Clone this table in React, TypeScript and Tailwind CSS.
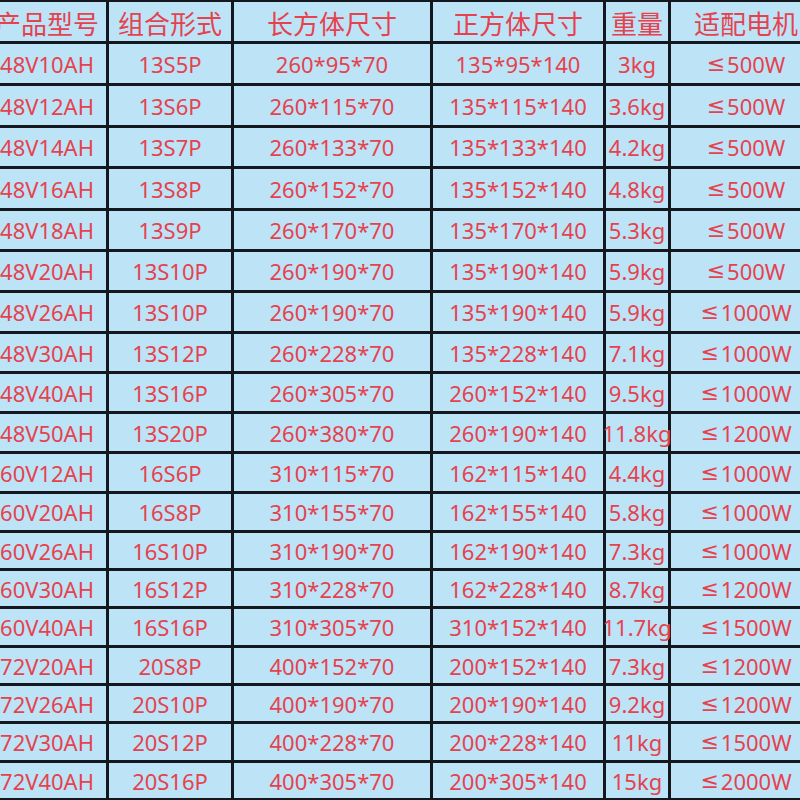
const header = ["产品型号", "组合形式", "长方体尺寸", "正方体尺寸", "重量", "适配电机"];

const rows: string[][] = [
  ["48V10AH", "13S5P", "260*95*70", "135*95*140", "3kg", "≤500W"],
  ["48V12AH", "13S6P", "260*115*70", "135*115*140", "3.6kg", "≤500W"],
  ["48V14AH", "13S7P", "260*133*70", "135*133*140", "4.2kg", "≤500W"],
  ["48V16AH", "13S8P", "260*152*70", "135*152*140", "4.8kg", "≤500W"],
  ["48V18AH", "13S9P", "260*170*70", "135*170*140", "5.3kg", "≤500W"],
  ["48V20AH", "13S10P", "260*190*70", "135*190*140", "5.9kg", "≤500W"],
  ["48V26AH", "13S10P", "260*190*70", "135*190*140", "5.9kg", "≤1000W"],
  ["48V30AH", "13S12P", "260*228*70", "135*228*140", "7.1kg", "≤1000W"],
  ["48V40AH", "13S16P", "260*305*70", "260*152*140", "9.5kg", "≤1000W"],
  ["48V50AH", "13S20P", "260*380*70", "260*190*140", "11.8kg", "≤1200W"],
  ["60V12AH", "16S6P", "310*115*70", "162*115*140", "4.4kg", "≤1000W"],
  ["60V20AH", "16S8P", "310*155*70", "162*155*140", "5.8kg", "≤1000W"],
  ["60V26AH", "16S10P", "310*190*70", "162*190*140", "7.3kg", "≤1000W"],
  ["60V30AH", "16S12P", "310*228*70", "162*228*140", "8.7kg", "≤1200W"],
  ["60V40AH", "16S16P", "310*305*70", "310*152*140", "11.7kg", "≤1500W"],
  ["72V20AH", "20S8P", "400*152*70", "200*152*140", "7.3kg", "≤1200W"],
  ["72V26AH", "20S10P", "400*190*70", "200*190*140", "9.2kg", "≤1200W"],
  ["72V30AH", "20S12P", "400*228*70", "200*228*140", "11kg", "≤1500W"],
  ["72V40AH", "20S16P", "400*305*70", "200*305*140", "15kg", "≤2000W"],
];

// "≤" looks better in DejaVu (flat bar under the chevron)
function Cell({ text }: { text: string }) {
  if (text.startsWith("≤")) {
    return (
      <>
        <span className="mr-[2px] font-['DejaVu_Sans',sans-serif]">≤</span>
        {text.slice(1)}
      </>
    );
  }
  return <>{text}</>;
}

export default function App() {
  return (
    <div className="w-[800px] h-[800px] overflow-hidden bg-[#15171f]">
      <div className="ml-[-12px] w-[834px] pt-[2px] grid gap-[3px] grid-cols-[118px_122px_196px_170px_62px_150px] grid-rows-[39px_39px_39px_38px_39px_38px_38px_38px_37px_37px_37px_37px_36px_35px_35px_36px_35px_35px_36px_35px] text-[#e5424e] font-['Noto_Sans','Noto_Sans_CJK_SC',sans-serif]">
        {header.map((h) => (
          <div
            key={h}
            className="bg-[#bde3f7] flex items-center justify-center whitespace-nowrap text-[26px] leading-none pt-[2px] font-['Noto_Sans_CJK_SC',sans-serif]"
          >
            {h}
          </div>
        ))}
        {rows.map((r) =>
          r.map((c, i) => (
            <div
              key={r[0] + i}
              className="bg-[#bde3f7] flex items-center justify-center whitespace-nowrap text-[22px] leading-none"
            >
              <Cell text={c} />
            </div>
          ))
        )}
      </div>
    </div>
  );
}
